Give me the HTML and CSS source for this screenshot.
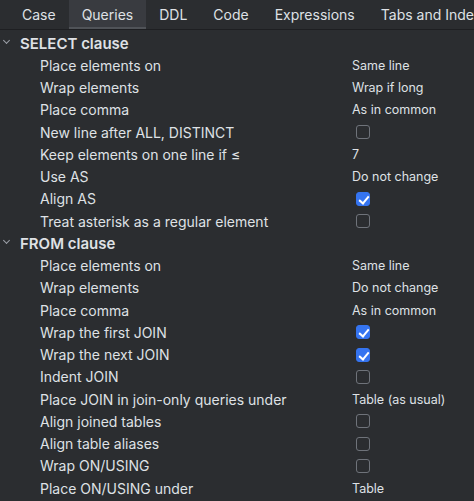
FILE: index.html
```html
<!DOCTYPE html>
<html lang="en">
<head>
  <meta charset="UTF-8">
  <title>Code Style – Queries</title>
  <link rel="stylesheet" href="styles.css">
</head>
<body>
  <div class="tabs">
    <div class="tab">Case</div>
    <div class="tab active">Queries</div>
    <div class="tab">DDL</div>
    <div class="tab">Code</div>
    <div class="tab">Expressions</div>
    <div class="tab">Tabs and Indents</div>
  </div>

  <div class="tree">
    <div class="group"><span class="chev"></span>SELECT clause</div>
    <div class="row"><span class="label">Place elements on</span><span class="val">Same line</span></div>
    <div class="row"><span class="label">Wrap elements</span><span class="val">Wrap if long</span></div>
    <div class="row"><span class="label">Place comma</span><span class="val">As in common</span></div>
    <div class="row"><span class="label">New line after ALL, DISTINCT</span><span class="val"><span class="cb"></span></span></div>
    <div class="row"><span class="label">Keep elements on one line if ≤</span><span class="val">7</span></div>
    <div class="row"><span class="label">Use AS</span><span class="val">Do not change</span></div>
    <div class="row"><span class="label">Align AS</span><span class="val"><span class="cb on"></span></span></div>
    <div class="row"><span class="label">Treat asterisk as a regular element</span><span class="val"><span class="cb"></span></span></div>

    <div class="group"><span class="chev"></span>FROM clause</div>
    <div class="row"><span class="label">Place elements on</span><span class="val">Same line</span></div>
    <div class="row"><span class="label">Wrap elements</span><span class="val">Do not change</span></div>
    <div class="row"><span class="label">Place comma</span><span class="val">As in common</span></div>
    <div class="row"><span class="label">Wrap the first JOIN</span><span class="val"><span class="cb on"></span></span></div>
    <div class="row"><span class="label">Wrap the next JOIN</span><span class="val"><span class="cb on"></span></span></div>
    <div class="row"><span class="label">Indent JOIN</span><span class="val"><span class="cb"></span></span></div>
    <div class="row"><span class="label">Place JOIN in join-only queries under</span><span class="val">Table (as usual)</span></div>
    <div class="row"><span class="label">Align joined tables</span><span class="val"><span class="cb"></span></span></div>
    <div class="row"><span class="label">Align table aliases</span><span class="val"><span class="cb"></span></span></div>
    <div class="row"><span class="label">Wrap ON/USING</span><span class="val"><span class="cb"></span></span></div>
    <div class="row"><span class="label">Place ON/USING under</span><span class="val">Table</span></div>
  </div>
</body>
</html>
```

FILE: styles.css
```css
:root{
  --bg:#2b2d30;
  --fg:#dfe1e5;
  --tab-active:#393b40;
  --line:#1e1f22;
  --accent:#3574f0;
  --cb-border:#6f737a;
}
*{box-sizing:border-box;margin:0}
body{
  font-family:Inter,"Noto Sans",sans-serif;
  background:var(--bg);color:var(--fg);
  width:474px;height:501px;overflow:hidden;
  font-size:13px;
}
.tabs{display:flex;height:30px;border-bottom:1px solid var(--line);white-space:nowrap;overflow:hidden}
.tab{padding:0 13px;display:flex;align-items:center;font-size:14px;height:29px;flex:none}
.tab:first-child{padding-left:22px}
.tab.active{background:var(--tab-active);box-shadow:inset 0 -2px 0 #505358}
.tree{padding-top:2px}
.group{display:flex;align-items:center;height:22.25px;padding-left:20px;position:relative;font-weight:600;font-size:15px}
.chev{position:absolute;left:4px;top:6px;width:5px;height:5px;border-right:1.2px solid #9da0a8;border-bottom:1.2px solid #9da0a8;transform:rotate(45deg)}
.row{display:flex;align-items:center;height:22.25px;padding-left:40px}
.label{flex:0 0 312px;font-size:14px}
.val{font-size:12.5px;display:flex;align-items:center}
.cb{width:14px;height:14px;border:1px solid var(--cb-border);border-radius:3px;margin-left:4px;position:relative}
.cb.on{background:var(--accent);border-color:var(--accent)}
.cb.on::after{content:"";position:absolute;left:4px;top:1px;width:4px;height:8px;border-right:2.2px solid #fff;border-bottom:2.2px solid #fff;transform:rotate(40deg)}
```
